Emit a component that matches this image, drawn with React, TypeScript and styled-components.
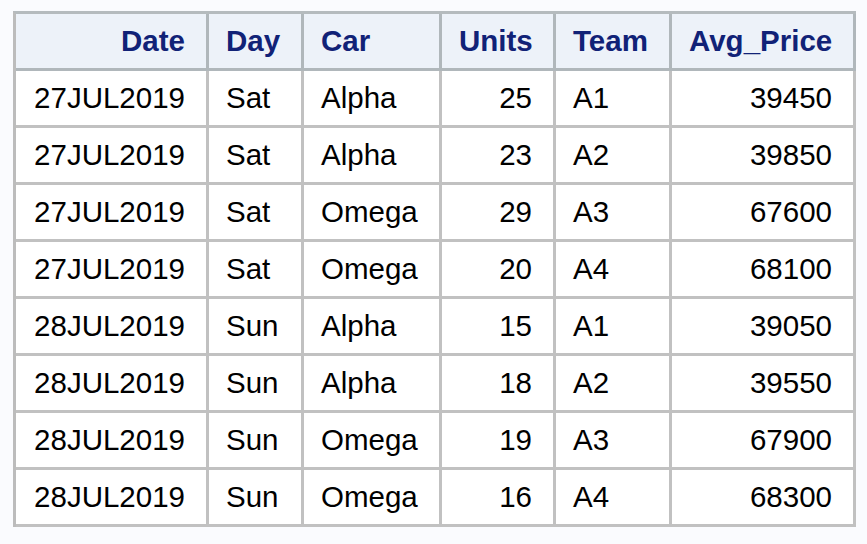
import styled, { createGlobalStyle } from 'styled-components';

const GlobalStyle = createGlobalStyle`
    html, body {
        margin: 0;
        padding: 0;
        background: #fafbfe;
    }
`;

const Page = styled.div`
    padding: 11px 13px;
    font-family: 'Liberation Sans', Arial, sans-serif;
`;

const Table = styled.table`
    border-collapse: separate;
    border-spacing: 0;
    table-layout: fixed;
    width: 843px;
    border-top: 3px solid #b5bbbe;
    border-left: 3px solid #bcbcbc;
    font-size: 29.5px;
`;

const Col = styled.col<{ $w: number }>`
    width: ${p => p.$w}px;
`;

const HeadCell = styled.th<{ $num?: boolean }>`
    height: 54px;
    padding: 0 21px 0 17px;
    background: #edf2f9;
    color: #112277;
    font-weight: bold;
    text-align: ${p => (p.$num ? 'right' : 'left')};
    border-right: 3px solid #b0b7bb;
    border-bottom: 3px solid #b0b7bb;
    white-space: nowrap;
`;

const Cell = styled.td<{ $num?: boolean }>`
    height: 54px;
    padding: 0 21px 0 17px;
    background: #fff;
    color: #000;
    text-align: ${p => (p.$num ? 'right' : 'left')};
    border-right: 3px solid #c1c1c1;
    border-bottom: 3px solid #c1c1c1;
    white-space: nowrap;
`;

const columns = [
    { key: 'date', label: 'Date', num: true, w: 193 },
    { key: 'day', label: 'Day', num: false, w: 95 },
    { key: 'car', label: 'Car', num: false, w: 138 },
    { key: 'units', label: 'Units', num: true, w: 114 },
    { key: 'team', label: 'Team', num: false, w: 116 },
    { key: 'price', label: 'Avg_Price', num: true, w: 184 },
] as const;

type Row = { date: string; day: string; car: string; units: number; team: string; price: number };

const rows: Row[] = [
    { date: '27JUL2019', day: 'Sat', car: 'Alpha', units: 25, team: 'A1', price: 39450 },
    { date: '27JUL2019', day: 'Sat', car: 'Alpha', units: 23, team: 'A2', price: 39850 },
    { date: '27JUL2019', day: 'Sat', car: 'Omega', units: 29, team: 'A3', price: 67600 },
    { date: '27JUL2019', day: 'Sat', car: 'Omega', units: 20, team: 'A4', price: 68100 },
    { date: '28JUL2019', day: 'Sun', car: 'Alpha', units: 15, team: 'A1', price: 39050 },
    { date: '28JUL2019', day: 'Sun', car: 'Alpha', units: 18, team: 'A2', price: 39550 },
    { date: '28JUL2019', day: 'Sun', car: 'Omega', units: 19, team: 'A3', price: 67900 },
    { date: '28JUL2019', day: 'Sun', car: 'Omega', units: 16, team: 'A4', price: 68300 },
];

export default function App() {
    return (
        <Page>
            <GlobalStyle />
            <Table>
                <colgroup>
                    {columns.map(c => (
                        <Col key={c.key} $w={c.w} />
                    ))}
                </colgroup>
                <thead>
                    <tr>
                        {columns.map(c => (
                            <HeadCell key={c.key} $num={c.num}>
                                {c.label}
                            </HeadCell>
                        ))}
                    </tr>
                </thead>
                <tbody>
                    {rows.map((r, i) => (
                        <tr key={i}>
                            {columns.map(c => (
                                <Cell key={c.key} $num={c.num}>
                                    {r[c.key]}
                                </Cell>
                            ))}
                        </tr>
                    ))}
                </tbody>
            </Table>
        </Page>
    );
}
